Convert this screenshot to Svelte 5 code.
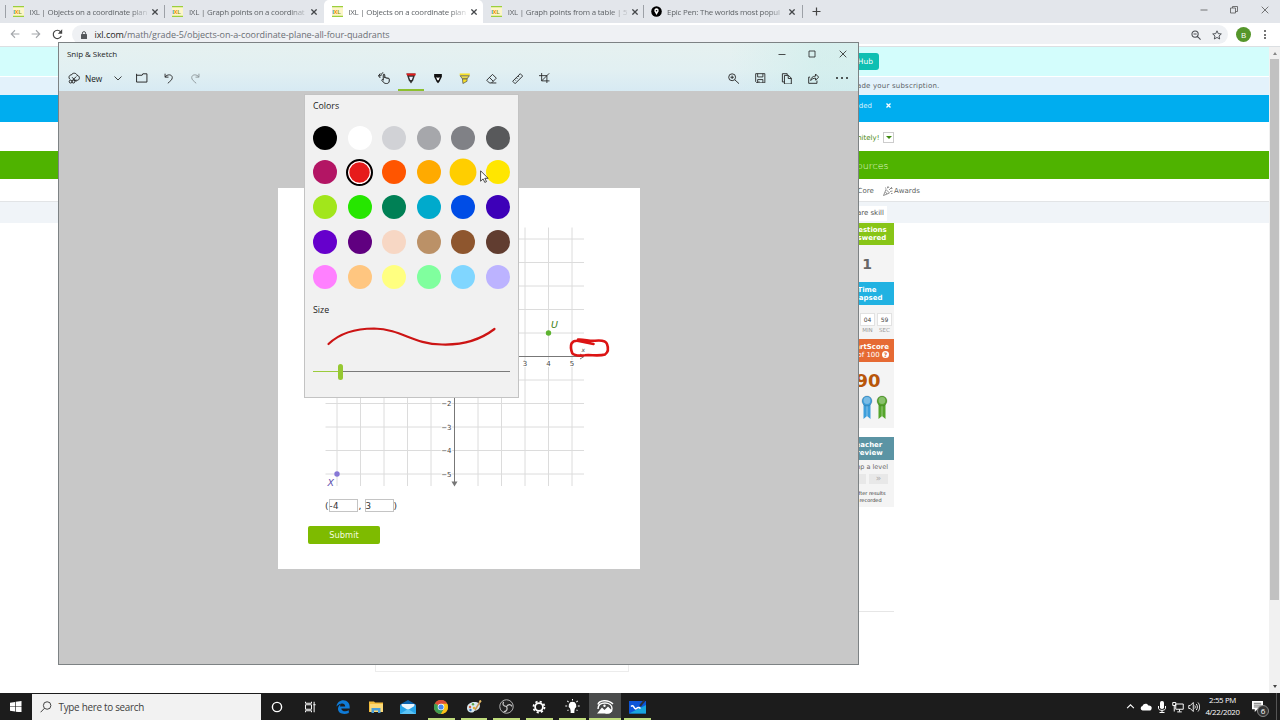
<script>
  const tabs = [
    { title: 'IXL | Objects on a coordinate plan', icon: 'ixl' },
    { title: 'IXL | Graph points on a coordinat', icon: 'ixl' },
    { title: 'IXL | Objects on a coordinate plan', icon: 'ixl', active: true },
    { title: 'IXL | Graph points from a table | 5', icon: 'ixl' },
    { title: 'Epic Pen: The worlds most popul', icon: 'epic' }
  ];

  const colors = [
    '#000000', '#ffffff', '#d1d2d6', '#a6a7ab', '#808186', '#58595b',
    '#b31564', '#e61b1b', '#ff5500', '#ffaa00', '#ffce00', '#ffe600',
    '#a2e61b', '#26e600', '#008055', '#00aacc', '#004de6', '#3d00b8',
    '#6600cc', '#600080', '#f7d7c4', '#bb9167', '#8e562e', '#613d30',
    '#ff80ff', '#ffc680', '#ffff80', '#80ff9e', '#80d6ff', '#bcb3ff'
  ];

  let selected = $state('#e61b1b');
  const hovered = '#ffce00';

  // chart geometry, in sheet pixels
  const ox = 176.5;
  const oy = 168.5;
  const unit = 23.5;
  const steps = [-5, -4, -3, -2, -1, 1, 2, 3, 4, 5];

  // stroke icons on a 16px grid
  const icons = {
    back: ['M15 8H2M8 2L2 8l6 6'],
    forward: ['M1 8h13M8 2l6 6-6 6'],
    chevron: ['M1 5l7 7 7-7'],
    chevronUp: ['M2 11l6-6 6 6'],
    folder: ['M.8 2.500v11.500h14.400V2.500H9.500L8.500 4.500H.8'],
    undo: ['M3 1v5h5M3 6C6 1.500 13 1.500 13.500 6.500 13.700 10 10 12 7 15'],
    redo: ['M13 1v5H8M13 6C10 1.500 3 1.500 2.500 6.500 2.300 10 6 12 9 15'],
    touch: [
      'M7 11V4c0-1.600 2-1.600 2 0v4c0-1.200 2-1.200 2 0v.5c0-1.200 2-1.200 2 0v.6c0-1.100 2-1.100 2 .2V12c0 2-1.500 3.400-3.500 3.400-3 0-3.800-1.200-6.200-3.900-.8-1 .3-1.800 1.200-1.200z',
      'M.8 5h3M3 2l-2.300 3L3 8M4 5c0-3 2-4 3-4'
    ],
    eraser: ['M1 10.500L9.500 2l5.500 5.500L8 14.500H5zM5 6.500l5.500 5.500M8 14.500h7'],
    ruler: ['M1 12L12 1l3.500 3.500L4.500 15.500zM4 9.500l1.500 1.500M6.500 7L8 8.500M9 4.500l1.500 1.500'],
    crop: ['M4 0v12h12M0 4h12v12M4 12L15.500.5'],
    zoomIn: ['M11 6.200a5 5 0 1 1-10 0 5 5 0 0 1 10 0zM10 10l6 5.500M3.500 6.200h5M6 3.700v5'],
    zoomOut: ['M11.500 6.500a5 5 0 1 1-10 0 5 5 0 0 1 10 0zM10.300 10.300l5 5M4 6.500h5'],
    save: ['M1 1h14v14H3l-2-2zM4 1v5h8V1M4 15v-5h8v5M6 12.500v2'],
    copy: ['M9 3V1H2v12h3M5 3.500h6l4 4V16H5zM10.500 3.500V8H15'],
    share: ['M3 6H1v9h12v-4M4 11c0-4 3-6.500 7-6.500V1.500L15.500 6 11 10.500v-3c-3 0-5.500 1-7 3.500z'],
    star: ['M8 1.300l2 4.500 4.900.5-3.700 3.300 1.100 4.800L8 11.900l-4.300 2.500 1.100-4.800L1.100 6.300 6 5.800z'],
    taskview: ['M2 5h8v6H2zM2 1v2h8V1M2 15v-2h8v2M13.500 1v14M12.500 5h3'],
    network: ['M5 4h10v7H5zM10 11v3M7 14.500h6M1 2h4v4H1zM3 6v8'],
    volume: ['M1 6h2l4-4v12L3 10H1zM9 6c1 1.500 1 2.500 0 4M11 4c2 2.500 2 5.500 0 8M13.300 2c3 3.500 3 8.500 0 12'],
    search: ['M14.500 6a5 5 0 1 1-10 0 5 5 0 0 1 10 0zM6 9.700L.8 15']
  };
</script>

{#snippet icon(name, size = 11, stroke = 1.3)}
  <svg class="icon" viewBox="0 0 16 16" style="width: {size}px; height: {size}px" stroke-width={stroke}>
    {#each icons[name] as d}
      <path {d} />
    {/each}
  </svg>
{/snippet}

{#snippet cross()}
  <svg class="icon cross" viewBox="0 0 8 8" stroke-width="1.7">
    <path d="M.5 .5l7 7M7.500 .5l-7 7" />
  </svg>
{/snippet}

<div class="screen">
  <div class="tabstrip">
    <div class="tabs">
      {#each tabs as tab, i}
        <div class="tab" class:active={tab.active} class:divided={i !== 1 && i !== 2}>
          {#if tab.icon === 'ixl'}
            <svg class="favicon" viewBox="0 0 11 11">
              <rect width="11" height="11" fill="#fdf6c8" />
              <path d="M0 .6h11M0 10.400h11" stroke="#9bcf3c" stroke-width="1.200" />
              <text x=".2" y="7.500" class="logo"><tspan fill="#1a8fd0">I</tspan><tspan fill="#f08a00">X</tspan><tspan fill="#8a9a10">L</tspan></text>
            </svg>
          {:else}
            <svg class="favicon" viewBox="0 0 11 11">
              <circle cx="5.500" cy="5.500" r="5.300" />
              <path d="M5.500 9L3.500 5.500C3 3 4 2.300 5.500 2.300S8 3 7.500 5.500z" fill="#fff" />
              <circle cx="5.500" cy="4.800" r=".8" />
            </svg>
          {/if}
          <span class="tab-title">{tab.title}</span>
          <span class="tab-close">{@render cross()}</span>
        </div>
      {/each}
    </div>
    <svg class="newtab" viewBox="0 0 9 9"><path d="M4.500 .5v8M.5 4.500h8" /></svg>
    <div class="controls">
      <svg viewBox="0 0 8 8"><path d="M.5 4h7" /></svg>
      <svg viewBox="0 0 8 8"><path d="M.5 2h5v5h-5zM2.500 2V.5h5v5h-2" /></svg>
      <svg viewBox="0 0 8 8"><path d="M.7 .7l6.600 6.600M7.300 .7L.7 7.300" /></svg>
    </div>
  </div>

  <div class="addressbar">
    <div class="nav">
      <span class="dim">{@render icon('back', 10, 1.7)}</span>
      <span class="dim">{@render icon('forward', 10, 1.7)}</span>
      <svg class="reload" viewBox="0 0 16 16">
        <path d="M13.500 10A6 6 0 1 1 12.500 4" />
        <path d="M14.800 .5v6.300H8.500z" fill="#444" stroke="none" />
      </svg>
    </div>
    <div class="omnibox">
      <svg class="lock" viewBox="0 0 6 8"><rect y="3" width="6" height="5" rx=".6" fill="#55585c" /><path d="M1.400 3.500V2.200a1.600 1.600 0 0 1 3.200 0v1.300" fill="none" stroke="#55585c" /></svg>
      <span class="url"><b>ixl.com</b>/math/grade-5/objects-on-a-coordinate-plane-all-four-quadrants</span>
      {@render icon('zoomOut', 10, 1.7)}
      {@render icon('star', 10, 1.5)}
    </div>
    <span class="avatar">B</span>
    <span class="kebab"><i></i><i></i><i></i></span>
  </div>

  <div class="viewport">
    <div class="page">
      <div class="band hub"><span class="hub-button">Hub</span></div>
      <div class="band notice">upgrade your subscription.</div>
      <div class="band banner">
        <span>added</span>
        <svg viewBox="0 0 5 5"><path d="M.5 .5l4 4M4.500 .5l-4 4" /></svg>
      </div>
      <div class="band greeting">
        <span>indefinitely!</span>
        <span class="dropdown"><i></i></span>
      </div>
      <div class="band main-nav">Resources</div>
      <div class="band sub-nav">
        <span>Common Core</span>
        <svg viewBox="0 0 10 10"><path d="M.5 9.500l2.500-6 3.500 3.500zM2.500 6l1.500 2M4 2.500L5 .5l1 1.500M6 4l3-3M7 5.500l2.500-.5M7.500 2.500h2M2 2h1M8 7.500h1.500" /></svg>
        <span>Awards</span>
      </div>
      <div class="band share"><span>Share skill</span></div>
      <div class="body">
        <div class="stats">
          <div class="stat-head green">Questions<br />answered</div>
          <div class="stat-body count">1</div>
          <div class="stat-head blue">Time<br />elapsed</div>
          <div class="stat-body timer">
            <div><b>04</b><small>MIN</small></div>
            <div><b>59</b><small>SEC</small></div>
          </div>
          <div class="stat-head orange">
            <span>SmartScore</span>
            <span class="outof">out of 100 <i>?</i></span>
          </div>
          <div class="stat-body score">
            <strong>90</strong>
            <div class="ribbons">
              {#each ['#3d9edb', '#55a52b'] as ribbon}
                <svg viewBox="0 0 12 25">
                  <path d="M2.500 9h7v15L6 21l-3.500 3z" fill={ribbon} />
                  <path d="M6 10v11" stroke="#ffffff66" />
                  <circle cx="6" cy="6" r="5" fill={ribbon} stroke="#0003" stroke-width=".8" />
                  <circle cx="6" cy="5.500" r="3.400" fill="#ffffff50" />
                </svg>
              {/each}
            </div>
          </div>
          <div class="stat-head teal">Teacher<br />preview</div>
          <div class="stat-body teacher">
            <span>Jump a level</span>
            <div class="level"><i></i><i>»</i></div>
            <p>After results<br />recorded</p>
          </div>
        </div>
        <div class="rule"></div>
        <div class="footer-box"></div>
      </div>
    </div>
    <div class="scrollbar">
      <i class="up"></i>
      <span class="thumb"></span>
      <i class="down"></i>
    </div>
  </div>

  <div class="taskbar">
    <span class="start">
      <svg viewBox="0 0 12 12"><path d="M0 1.700L5.300 1v4.700H0zM6 .9L12 0v5.700H6zM0 6.300h5.300V11L0 10.300zM6 6.300h6V12l-6-.9z" fill="#fff" /></svg>
    </span>
    <div class="search">
      {@render icon('search', 12, 1.3)}
      <span>Type here to search</span>
    </div>
    <div class="apps">
      <span class="app"><svg viewBox="0 0 14 14"><circle cx="7" cy="7" r="4.600" fill="none" stroke="#fff" stroke-width="1.400" /></svg></span>
      <span class="app light">{@render icon('taskview', 12, 1.3)}</span>
      <span class="app">
        <svg viewBox="0 0 14 14"><path d="M.5 6.500C1 2.500 4 .3 7.300 .3c4 0 6.400 3 6.400 6.500v1.600H5.300c.2 3 4.500 3.600 7.500 1.800v2.700C8 15.300 1.700 13.500 2 8.700 2.100 6.700 3.300 5 5 4.200c-.7.700-.9 1.500-1 2.200h5.200C9.200 2.600 4 2.300 .5 6.500z" fill="#0f7bd7" /></svg>
      </span>
      <span class="app">
        <svg viewBox="0 0 14 14"><path d="M0 1.500h5l1 1h8V12H0z" fill="#f3bd3d" /><path d="M1 4h13v8H1z" fill="#fbd977" /><path d="M2.500 13V8h9v5H9v-2.500H5V13z" fill="#4b9fd9" /></svg>
      </span>
      <span class="app">
        <svg class="mail" viewBox="0 0 16 14"><path d="M0 4.500L8 0l8 4.500V14H0z" fill="#0b63ad" /><path d="M1.500 4h13v6h-13z" fill="#eaf5fc" /><path d="M0 5l8 5 8-5v9H0z" fill="#27a5ea" /><path d="M0 14l8-5 8 5z" fill="#5cc3f5" /></svg>
      </span>
      <span class="app running">
        <svg viewBox="0 0 14 14"><circle cx="7" cy="7" r="7" fill="#e5a91b" /><path d="M7 7L.9 3.500A7 7 0 0 1 13.100 3.500z" fill="#dd4b39" /><path d="M7 7L.9 3.500A7 7 0 0 0 7 14l3-5.300z" fill="#3f9e52" /><path d="M7 3.800h6.200A7 7 0 0 1 7 14l2.900-5.300z" fill="#fbc116" /><circle cx="7" cy="7" r="3.300" fill="#fff" /><circle cx="7" cy="7" r="2.600" fill="#4787ed" /></svg>
      </span>
      <span class="app running">
        <svg class="wide" viewBox="0 0 16 14"><path d="M1 8c0-4 4-6.500 8.500-6C14 2.500 15 6 13 8.500s-4 1.500-5 3C7 13.500 1 13 1 8z" fill="#d8e8ef" /><circle cx="4" cy="7" r="1.200" fill="#d25d3a" /><circle cx="7" cy="4.300" r="1.200" fill="#5da345" /><circle cx="4.500" cy="10" r="1.200" fill="#3674b8" /><circle cx="8" cy="8" r="1.200" fill="#e4b137" /><path d="M9 10l5.500-9" stroke="#c99552" stroke-width="1.500" /><path d="M13.500 2L15 .5" stroke="#e7bd67" stroke-width="2" /></svg>
      </span>
      <span class="app running">
        <svg class="obs" viewBox="0 0 16 16"><circle cx="8" cy="8" r="7.200" fill="#222" stroke="#bbb" /><path d="M8 8c-3.500 0-4.500-2.500-3-5M8 8c2-3 5-2.500 6 0M8 8c1.500 3 0 5.500-3 5.500" fill="none" stroke="#c8c8c8" stroke-width="1.300" /></svg>
      </span>
      <span class="app running">
        <svg viewBox="0 0 14 14"><circle cx="7" cy="7" r="3.900" fill="none" stroke="#fff" stroke-width="1.800" /><circle cx="7" cy="7" r="5.500" fill="none" stroke="#fff" stroke-width="1.800" stroke-dasharray="2.160 2.160" /></svg>
      </span>
      <span class="app running">
        <svg class="obs" viewBox="0 0 16 16"><path d="M8 3a4 4 0 0 0-2.600 7.100L6 12.500V15h4v-2.500l.6-2.400A4 4 0 0 0 8 3z" fill="#fff" /><path d="M8 0v1.500M2.500 2l1.300 1.300M13.500 2l-1.300 1.300M.3 7.500h2M13.700 7.500h2M2.700 12.500l1-1M13.300 12.500l-1-1" stroke="#fff" stroke-width="1.100" /></svg>
      </span>
      <span class="app running current">
        <svg class="snip" viewBox="0 0 18 15"><path d="M2 10C2 5 5.500 4 9 4c4 0 7 2 7 5.500S13.500 14 9.500 14" fill="none" stroke="#fff" stroke-width="1.400" /><path d="M1 14.500l5-6 2.500 2.500 3.500-3.500 4.500 4.500-3 2.500z" fill="#fff" /><circle cx="8.500" cy="6.700" r="1.200" fill="#fff" /><path d="M2 5.500C3 1 12 0 17 5" fill="none" stroke="#fff" stroke-width="1.500" /></svg>
      </span>
      <span class="app running">
        <svg class="board" viewBox="0 0 17 14"><rect y="1" width="17" height="12.500" fill="#0c55d8" /><path d="M0 13.500L17 5v8.500z" fill="#18a5dc" /><path d="M2 6.500c3-3 3 4 5.500 2 1.500-1.500 3-1 4 0" fill="none" stroke="#fff" stroke-width="1.500" /><path d="M11 6l4.500-5.500" stroke="#2b2f38" stroke-width="2" /></svg>
      </span>
    </div>
    <div class="tray">
      <span>{@render icon('chevronUp', 9, 1.9)}</span>
      <span><svg viewBox="0 0 12 12"><path d="M2.500 9.500a2.300 2.300 0 0 1 0-4.500C3.500 2 7.500 2 8.300 4.500c2.700-.3 4 1.500 3.200 3.500-.4 1-1 1.500-2 1.500z" fill="#fff" /></svg></span>
      <span><svg viewBox="0 0 12 12"><rect x="4" y="0" width="4" height="8" rx="1.800" fill="#fff" /><path d="M2.500 5v2.500C3 10 9 10 9.500 7.500V5M6 9.500V12M3.500 11.500h5" fill="none" stroke="#fff" /></svg></span>
      <span>{@render icon('network', 12, 1.3)}</span>
      <span>{@render icon('volume', 12, 1.2)}</span>
      <div class="clock"><span>2:55 PM</span><span>4/22/2020</span></div>
      <div class="notes">
        <svg viewBox="0 0 12 12"><path d="M0 0h12v9H6l-3 3V9H0z" fill="#fff" /><path d="M2 2.500h8M2 4.500h8M2 6.500h8" stroke="#444" stroke-width=".8" /></svg>
        <span class="badge">6</span>
      </div>
    </div>
  </div>

  <div class="window">
    <div class="window-head">
      <div class="titlebar">
        <span>Snip &amp; Sketch</span>
        <div class="controls">
          <svg viewBox="0 0 8 8"><path d="M.5 4.500h7" /></svg>
          <svg viewBox="0 0 8 8"><path d="M1 1h6v6H1z" /></svg>
          <svg viewBox="0 0 8 8"><path d="M.7 .7l6.600 6.600M7.300 .7L.7 7.300" /></svg>
        </div>
      </div>
      <div class="toolbar">
        <div class="tools left">
          <span class="new">
            <svg class="icon snip-new" viewBox="0 0 16 16" stroke-width="1.300"><path d="M3 10C0 8 1.500 3.500 4.500 4 6 .5 11.500 1 12 4.500c3.500 0 4.500 5.500 1 6.500H8M6 11l5-5M5.500 7l5.500 6" /><circle cx="3.500" cy="12.800" r="1.900" /><circle cx="7.200" cy="12.800" r="1.900" /></svg>
            New
          </span>
          <span class="more">{@render icon('chevron', 8, 1.7)}</span>
          <button aria-label="Open">{@render icon('folder', 11.5)}</button>
          <button aria-label="Undo">{@render icon('undo', 11)}</button>
          <button aria-label="Redo" class="disabled">{@render icon('redo', 11)}</button>
        </div>
        <div class="tools middle">
          <button aria-label="Touch writing">{@render icon('touch', 12)}</button>
          <button aria-label="Ballpoint pen" class="on">
            <svg class="pen" viewBox="0 0 10 12"><path d="M0 .5h10L7.500 8 5 11.500 2.500 8z" fill="#333" /><path d="M0 .5h10v2.200H.7z" fill={selected} /><path d="M2.800 4h4.400L5.800 7.500H4.200z" fill="#eef" /></svg>
          </button>
          <button aria-label="Pencil">
            <svg class="pen" viewBox="0 0 10 12"><path d="M.8 1h8.400v3L6.500 9.500 5 11.200 3.500 9.500.8 4z" fill="#111" /><path d="M3 4.500l2 .8 2-.8-1.300 3.500H4.300z" fill="#fff" /></svg>
          </button>
          <button aria-label="Highlighter">
            <svg class="pen marker" viewBox="0 0 12 12"><path d="M.5 .5h11v2.300H.5z" fill="#f6df27" /><path d="M1 3h10L8.500 6.500h-5z" fill="#e8d94a" stroke="#555" stroke-width=".8" /><path d="M3.500 6.500h5V9L4 11.500z" fill="#f6df27" stroke="#555" stroke-width=".8" /></svg>
          </button>
          <button aria-label="Eraser">{@render icon('eraser')}</button>
          <button aria-label="Ruler">{@render icon('ruler')}</button>
          <button aria-label="Crop">{@render icon('crop', 10.5)}</button>
        </div>
        <div class="tools right">
          <button aria-label="Zoom">{@render icon('zoomIn')}</button>
          <button aria-label="Save">{@render icon('save', 10.5)}</button>
          <button aria-label="Copy">{@render icon('copy')}</button>
          <button aria-label="Share">{@render icon('share')}</button>
          <button aria-label="See more" class="dots"><i></i><i></i><i></i></button>
        </div>
      </div>
    </div>

    <div class="canvas">
      <div class="sheet">
        <svg class="chart" viewBox="0 0 362 305">
          {#each steps as n}
            <path class="grid" d="M{ox + n * unit} 39.500V298" />
            <path class="grid" d="M47.500 {oy + n * unit}H306" />
          {/each}
          <path class="axis" d="M{ox} 39.500V297M47.500 {oy}H305" />
          <path d="M{ox - 3} 293.500l3 5 3-5z" fill="#777" />
          <path d="M302 {oy - 2.5}l4 2.500-4 2.500" class="axis" />
          {#each steps as n}
            <text class="tick" x={ox + n * unit} y={oy + 9.5} text-anchor="middle">{n}</text>
            <text class="tick" x={ox - 3} y={oy - n * unit + 2.5} text-anchor="end">{n < 0 ? `−${-n}` : n}</text>
          {/each}
          <circle cx={ox + 4 * unit} cy={oy - unit} r="2.700" fill="#5db32f" />
          <text class="point" x="273" y="140" fill="#3b7d12">U</text>
          <circle cx={ox - 5 * unit} cy={oy + 5 * unit} r="2.700" fill="#8678d6" />
          <text class="point" x="49.500" y="297.500" fill="#5c4fae">X</text>
          <text class="tick axis-name" x="303.500" y="164">x</text>
          <path class="ink" d="M315.500 156C310 154.500 302 154 300 151.500 306 151 312 153.500 317 152.700 324 152 328 153 329 156 330.500 160 330.500 164 327 166.500 321 168.500 312 166.500 307 167.300 301 168 296 167.500 294.300 165.300 293 162 292.500 158 293.500 155.500 295 153 299 152.500 302 153.200Z" />
        </svg>
        <div class="answer">
          <span>(</span><span class="field">-4</span><span class="comma">,</span><span class="field">3</span><span>)</span>
        </div>
        <button class="submit">Submit</button>
      </div>
    </div>

    <div class="flyout">
      <h4>Colors</h4>
      <div class="swatches">
        {#each colors as color}
          <button
            class="swatch"
            class:selected={color === selected}
            class:hovered={color === hovered}
            style="background-color: {color}"
            aria-label={color}
            onclick={() => (selected = color)}
          ></button>
        {/each}
      </div>
      <h4>Size</h4>
      <svg class="preview" viewBox="0 0 197 30">
        <path d="M15.500 23C27 12 42 7.500 61 7.500c29 1 38 15.500 68 16 24 .8 40-6 52.500-15.500" />
      </svg>
      <div class="slider"><span class="filled"></span><span class="handle"></span><span class="track"></span></div>
    </div>
  </div>

  <svg class="cursor" viewBox="0 0 9 13"><path d="M.6 .8v10.400l2.500-2.300 1.700 3.500 1.700-.8-1.700-3.300h3.300z" fill="#fff" stroke="#222" stroke-width=".8" /></svg>
</div>

<style>
  :global(body) {
    margin: 0;
    overflow: hidden;
  }

  .screen {
    position: relative;
    display: flex;
    flex-direction: column;
    width: 1280px;
    height: 720px;
    overflow: hidden;
    background: #fff;
    font-family: "Open Sans", "Noto Sans", sans-serif;
    color: #333;
  }

  svg {
    display: block;
    flex: none;
  }

  button {
    padding: 0;
    border: none;
    background: none;
    font: inherit;
    color: inherit;
  }

  .icon {
    fill: none;
    stroke: currentColor;
  }

  .cross {
    width: 6px;
    height: 6px;
  }

  /* browser chrome */
  .tabstrip {
    display: flex;
    align-items: center;
    height: 23px;
    background: #e3e6eb;
  }

  .tabs {
    display: flex;
    align-self: stretch;
    padding-left: 5px;
  }

  .tab {
    display: flex;
    align-items: center;
    box-sizing: border-box;
    width: 159.4px;
    padding: 0 7px 0 8px;
    position: relative;
  }

  .tab.divided::after,
  .tab:first-child::before {
    content: "";
    position: absolute;
    right: -1px;
    top: 5px;
    width: 1px;
    height: 13px;
    background: #9da1a7;
  }

  .tab:first-child::before {
    left: 0;
  }

  .tab.active {
    background: #fff;
    border-radius: 5px 5px 0 0;
  }

  .favicon {
    width: 11px;
    height: 11px;
  }

  .logo {
    font: bold 5.5px "Liberation Sans", sans-serif;
  }

  .tab-title {
    flex: 1;
    margin-left: 5.5px;
    white-space: nowrap;
    font-size: 7.9px;
    letter-spacing: -0.22px;
    color: #606468;
    mask-image: linear-gradient(90deg, #000 86%, #0003 100%);
  }

  .tab-close {
    margin-left: 5px;
    color: #44474a;
  }

  .newtab {
    width: 9px;
    height: 9px;
    margin-left: 10px;
    stroke: #444;
    stroke-width: 1.2;
  }

  .controls {
    display: flex;
    margin-left: auto;
  }

  .controls svg {
    width: 8px;
    height: 8px;
    fill: none;
    stroke: #555;
    stroke-width: 0.8;
  }

  .tabstrip .controls {
    gap: 22.7px;
    padding: 0 11px 4px 0;
  }

  .addressbar {
    display: flex;
    align-items: center;
    height: 24px;
    border-bottom: 1px solid #dcdfe2;
    box-sizing: border-box;
  }

  .nav {
    display: flex;
    gap: 11px;
    width: 62.5px;
    padding-left: 9.5px;
    color: #4b4e52;
  }

  .dim {
    color: #a4a7ab;
  }

  .reload {
    width: 11px;
    height: 11px;
    fill: none;
    stroke: #444;
    stroke-width: 1.7;
  }

  .omnibox {
    display: flex;
    align-items: center;
    width: 1156px;
    height: 19px;
    box-sizing: border-box;
    padding: 0 6px 0 9px;
    border-radius: 10px;
    background: #eff1f4;
    color: #4a4d52;
    gap: 11.5px;
  }

  .lock {
    width: 6px;
    height: 8px;
  }

  .url {
    flex: 1;
    margin-left: -4px;
    font-size: 9px;
    letter-spacing: -0.06px;
    color: #6b6f74;
  }

  .url b {
    font-weight: normal;
    color: #1d1f22;
  }

  .avatar {
    width: 15px;
    height: 15px;
    margin-left: 8px;
    border-radius: 50%;
    background: #55962b;
    color: #fff;
    font-size: 8px;
    line-height: 15px;
    text-align: center;
  }

  .kebab {
    display: flex;
    flex-direction: column;
    gap: 1.7px;
    margin-left: 13px;
  }

  .kebab i {
    width: 2px;
    height: 2px;
    border-radius: 50%;
    background: #444;
  }

  /* web page */
  .viewport {
    display: flex;
    height: 646px;
  }

  .page {
    display: flex;
    flex-direction: column;
    width: 1269px;
    font-family: "DejaVu Sans", sans-serif;
    font-size: 7px;
  }

  .band {
    display: flex;
    align-items: center;
    justify-content: flex-end;
    flex: none;
    box-sizing: border-box;
    white-space: nowrap;
  }

  .hub {
    height: 29px;
    padding-right: 390px;
    background: #d3fdfc;
  }

  .hub-button {
    padding: 0 6px 0 14px;
    border-radius: 3px;
    background: #0fbfb2;
    color: #fff;
    line-height: 17px;
    font-size: 7.5px;
  }

  .notice {
    height: 19px;
    padding-right: 329.5px;
    border-top: 1px solid #fff;
    background: #e3f2fb;
    color: #5b6166;
    letter-spacing: 0.2px;
  }

  .banner {
    height: 27px;
    padding: 0 378.5px 6px 0;
    gap: 13.5px;
    background: #00adef;
    color: #d9f2fc;
  }

  .banner svg {
    width: 5px;
    height: 5px;
    stroke: #fff;
    stroke-width: 1.3;
  }

  .greeting {
    height: 29px;
    padding: 2px 375px 0 0;
    gap: 3.5px;
    color: #4e8a13;
  }

  .dropdown {
    display: flex;
    align-items: center;
    justify-content: center;
    width: 9px;
    height: 9px;
    border: 1px solid #ccc;
  }

  .dropdown i {
    border: 3px solid transparent;
    border-top: 3.5px solid #3f8a10;
    border-bottom: 0;
  }

  .main-nav {
    height: 28px;
    padding-right: 380.5px;
    background: #4fb300;
    color: #e2f6cf;
    font-size: 9.5px;
    font-weight: 200;
  }

  .sub-nav {
    height: 23px;
    padding: 1px 349px 0 0;
    color: #5c5f62;
    border-bottom: 1px solid #e2e4e6;
    letter-spacing: 0.1px;
  }

  .sub-nav svg {
    width: 10px;
    height: 10px;
    margin: 0 1.5px 0 8.5px;
    fill: none;
    stroke: #777;
    stroke-width: 0.8;
  }

  .share {
    height: 21px;
    padding: 4px 382px 2px 0;
    background: #f0f4f8;
  }

  .share span {
    padding: 0 3px;
    background: #fff;
    line-height: 15px;
    color: #555;
  }

  .body {
    display: flex;
    flex-direction: column;
    flex: 1;
    min-height: 0;
  }

  .stats {
    display: flex;
    flex-direction: column;
    width: 54px;
    margin-left: 840px;
  }

  .stat-head {
    display: flex;
    flex-direction: column;
    justify-content: center;
    box-sizing: border-box;
    height: 22px;
    color: #fff;
    font-size: 7px;
    font-weight: bold;
    line-height: 8px;
    text-align: center;
    white-space: nowrap;
  }

  .green { background: #88c517; }
  .blue { background: #21b2e2; height: 23px; }
  .orange { background: #e66a34; height: 23px; align-items: flex-end; padding-right: 5px; }
  .teal { background: #5b94a4; margin-top: 9px; height: 23px; }

  .outof {
    font-weight: normal;
  }

  .outof i {
    display: inline-block;
    width: 7px;
    height: 7px;
    border-radius: 50%;
    background: #fff;
    color: #e66a34;
    font: bold 6px/7px "DejaVu Sans", sans-serif;
    text-align: center;
  }

  .stat-body {
    box-sizing: border-box;
    background: #f4f4f4;
    text-align: center;
  }

  .count {
    height: 37px;
    line-height: 39px;
    font-size: 14px;
    font-weight: bold;
    color: #666;
  }

  .timer {
    display: flex;
    justify-content: flex-end;
    gap: 2px;
    height: 34px;
    padding: 8px 2px 0 0;
  }

  .timer div {
    width: 15px;
  }

  .timer b {
    display: block;
    border: 1px solid #e2e2e2;
    background: #fff;
    font-size: 6px;
    font-weight: normal;
    line-height: 11px;
    color: #444;
  }

  .timer small {
    display: block;
    margin-top: 1px;
    font-size: 5.5px;
    line-height: 6px;
    color: #999;
  }

  .score {
    height: 66px;
    padding: 8px 6px 0 0;
  }

  .score strong {
    display: block;
    padding-right: 7.5px;
    text-align: right;
    font-size: 18px;
    line-height: 21px;
    color: #b8560a;
  }

  .ribbons {
    display: flex;
    justify-content: flex-end;
    gap: 3px;
    margin-top: 4px;
  }

  .ribbons svg {
    width: 12px;
    height: 25px;
    fill: none;
  }

  .teacher {
    height: 47px;
    padding: 3px 6px 0 0;
    text-align: right;
    white-space: nowrap;
    color: #666;
    font-size: 6.5px;
    line-height: 8px;
  }

  .level {
    display: flex;
    justify-content: flex-end;
    gap: 3px;
    margin-top: 3px;
  }

  .level i {
    width: 19px;
    height: 10px;
    background: #e8e8e8;
    color: #aaa;
    font-size: 9px;
    font-style: normal;
    text-align: center;
  }

  .teacher p {
    margin: 6px 0 0;
    font-size: 5px;
    line-height: 7px;
    text-align: center;
    padding-left: 13px;
    color: #333;
  }

  .rule {
    width: 54px;
    height: 104px;
    margin-left: 840px;
    border-bottom: 1px solid #e6e6e6;
  }

  .footer-box {
    width: 254px;
    height: 60px;
    margin-left: 375px;
    border: 1px solid #ececec;
    border-top: none;
    box-sizing: border-box;
  }

  .scrollbar {
    display: flex;
    flex-direction: column;
    align-items: center;
    width: 11px;
    background: #f1f1f1;
  }

  .scrollbar .thumb {
    width: 9px;
    height: 541px;
    background: #c1c1c1;
  }

  .scrollbar i {
    border: 2.5px solid transparent;
  }

  .scrollbar .up {
    margin: 5px 0 4px;
    border-top: 0;
    border-bottom: 3px solid #888;
  }

  .scrollbar .down {
    margin: auto 0 5px;
    border-bottom: 0;
    border-top: 3px solid #444;
  }

  /* taskbar */
  .taskbar {
    display: flex;
    height: 27px;
    background: #1c1c1c;
  }

  .start {
    display: flex;
    align-items: center;
    justify-content: center;
    width: 32px;
  }

  .start svg {
    width: 11.5px;
    height: 11.5px;
  }

  .search {
    display: flex;
    align-items: center;
    gap: 6.5px;
    box-sizing: border-box;
    width: 229px;
    margin-top: 1px;
    padding-left: 8px;
    background: #f2f2f2;
    color: #3f3f3f;
    font-size: 9.9px;
    letter-spacing: -0.28px;
  }

  .apps {
    display: flex;
  }

  .app {
    display: flex;
    align-items: center;
    justify-content: center;
    position: relative;
    width: 32.75px;
  }

  .app svg {
    width: 14px;
    height: 14px;
  }

  .light {
    color: #fff;
  }

  .app .obs {
    width: 15px;
    height: 15px;
  }

  .app .wide,
  .app .mail {
    width: 16px;
  }

  .app .snip {
    width: 18px;
    height: 15px;
  }

  .app .board {
    width: 17px;
  }

  .app.running::after {
    content: "";
    position: absolute;
    bottom: 0;
    left: 3px;
    right: 3px;
    height: 2px;
    background: #bfdc7c;
  }

  .app.current {
    background: #4a4b4b;
  }

  .app.current::after {
    left: 0;
    right: 0;
  }

  .tray {
    display: flex;
    align-items: center;
    margin-left: auto;
    padding-right: 5px;
    color: #fff;
    border-right: 1px solid #555;
    margin-right: 3px;
  }

  .tray > span {
    display: flex;
    justify-content: center;
    width: 16px;
  }

  .tray > span svg {
    max-width: 12px;
  }

  .clock {
    display: flex;
    flex-direction: column;
    align-items: center;
    width: 41px;
    margin-top: -2px;
    font-size: 7.8px;
    line-height: 12px;
    letter-spacing: -0.3px;
    white-space: nowrap;
  }

  .notes {
    position: relative;
    width: 19px;
    margin-left: 9px;
  }

  .notes svg {
    width: 11px;
    height: 11px;
  }

  .badge {
    position: absolute;
    left: 5px;
    top: 4px;
    width: 10px;
    height: 10px;
    border: 1px solid #888;
    border-radius: 50%;
    background: #333;
    font-size: 8px;
    line-height: 10px;
    text-align: center;
  }

  /* snip & sketch window */
  .window {
    position: absolute;
    left: 58px;
    top: 42px;
    width: 801px;
    height: 623px;
    box-sizing: border-box;
    border: 1px solid #7d8284;
    background: #c8c8c8;
    color: #222;
    display: flex;
    flex-direction: column;
  }

  .window-head {
    flex: none;
    height: 48px;
    background:
      linear-gradient(90deg, transparent 84%, #cdeeeb99 95%),
      linear-gradient(#e6f1f0, #e2f0f2 55%, #d7eaf3);
  }

  .titlebar {
    display: flex;
    align-items: center;
    height: 22px;
    padding: 0 11px 0 8px;
    font-size: 8px;
    letter-spacing: -0.05px;
  }

  .titlebar span {
    margin-top: -1px;
  }

  .titlebar .controls {
    gap: 22.7px;
  }

  .titlebar .controls svg {
    stroke: #222;
  }

  .toolbar {
    display: flex;
    height: 26px;
  }

  .tools {
    display: flex;
  }

  .left {
    width: 312px;
  }

  .new {
    display: flex;
    align-items: center;
    gap: 5.5px;
    width: 43px;
    padding-left: 8.5px;
    font-size: 8.3px;
    letter-spacing: -0.1px;
  }

  .snip-new {
    width: 12px;
    height: 12px;
  }

  .more {
    display: flex;
    align-items: center;
    justify-content: center;
    width: 15px;
  }

  .tools button {
    display: flex;
    align-items: center;
    justify-content: center;
    width: 26.7px;
    box-sizing: border-box;
  }

  .left .more + button {
    margin-left: 3px;
  }

  .middle .on {
    border-bottom: 2px solid #8cc02f;
    padding-top: 2px;
  }

  .disabled {
    opacity: 0.45;
  }

  .pen {
    width: 10px;
    height: 11px;
  }

  .marker {
    width: 11.5px;
  }

  .right {
    margin-left: auto;
    padding-right: 1px;
  }

  .right .dots {
    gap: 3px;
    width: 30px;
  }

  .dots i {
    width: 2px;
    height: 2px;
    border-radius: 50%;
    background: #222;
  }

  .canvas {
    flex: 1;
    display: flex;
    justify-content: center;
    padding: 97px 0 0 1px;
  }

  .sheet {
    width: 362px;
    height: 381px;
    background: #fff;
    font-family: "DejaVu Sans", sans-serif;
  }

  .chart {
    width: 362px;
    height: 305px;
  }

  .grid {
    stroke: #dcdcdc;
    fill: none;
  }

  .axis {
    stroke: #777;
    fill: none;
  }

  .tick {
    font-size: 7px;
    fill: #444;
    stroke: #fff;
    stroke-width: 2px;
    paint-order: stroke;
  }

  .axis-name {
    font-size: 6px;
    font-style: italic;
  }

  .point {
    font-size: 9.5px;
    font-style: italic;
  }

  .ink {
    fill: none;
    stroke: #dc1414;
    stroke-width: 2.6;
    stroke-linejoin: round;
  }

  .answer {
    display: flex;
    align-items: center;
    margin: 6px 0 0 47px;
    font-size: 9px;
    line-height: 12px;
    color: #333;
  }

  .field {
    box-sizing: border-box;
    width: 29px;
    height: 13px;
    border: 1px solid #c4c4c4;
    font-size: 8.7px;
    letter-spacing: 0.4px;
  }

  .comma {
    width: 7px;
    padding-left: 1px;
    box-sizing: border-box;
  }

  .submit {
    display: block;
    width: 72px;
    height: 18px;
    margin: 14px 0 0 30px;
    border-radius: 2px;
    background: #7ebb00;
    color: #f2fadf;
    font-size: 8.3px;
    line-height: 18px;
  }

  /* pen colour flyout */
  .flyout {
    position: absolute;
    left: 245px;
    top: 51px;
    width: 215px;
    height: 304px;
    box-sizing: border-box;
    padding: 5px 8px;
    border: 1px solid #c3c3c3;
    background: #f1f1f1;
  }

  .flyout h4 {
    margin: 0;
    font-size: 8.8px;
    font-weight: normal;
    line-height: 13px;
  }

  .swatches {
    display: grid;
    grid-template-columns: repeat(6, 24px);
    justify-content: space-between;
    row-gap: 10.7px;
    margin: 12.8px 0 15px;
  }

  .swatch {
    width: 24px;
    height: 24px;
    border-radius: 50%;
  }

  .swatch.selected {
    width: 27px;
    height: 27px;
    margin: -1.5px;
    border: 2px solid #000;
    box-shadow: inset 0 0 0 1.3px #fff;
  }

  .swatch.hovered {
    transform: scale(1.12);
  }

  .preview {
    width: 197px;
    height: 30px;
    margin-top: 4px;
    fill: none;
    stroke: #cc1414;
    stroke-width: 2.2;
    stroke-linecap: round;
  }

  .slider {
    display: flex;
    align-items: center;
    margin-top: 13px;
  }

  .filled {
    width: 25px;
    height: 1px;
    background: #9bcb3c;
  }

  .handle {
    width: 5px;
    height: 16px;
    border-radius: 3px;
    background: #96c832;
  }

  .track {
    flex: 1;
    height: 1px;
    background: #7a7a7a;
  }

  .cursor {
    position: absolute;
    left: 480px;
    top: 170px;
    width: 9px;
    height: 13px;
  }
</style>
